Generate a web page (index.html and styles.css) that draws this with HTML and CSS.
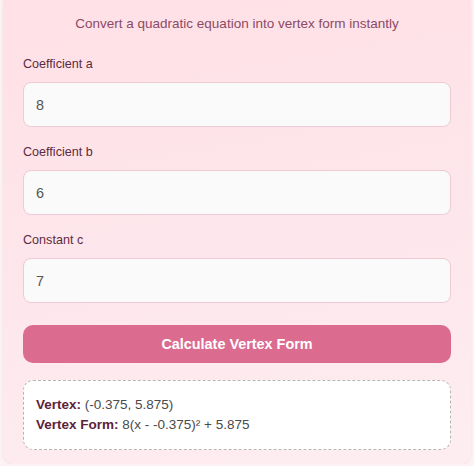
FILE: index.html
```html
<!DOCTYPE html>
<html>
<head>
<meta charset="utf-8">
<link rel="stylesheet" href="styles.css">
</head>
<body>
<div class="card">
  <p class="subtitle">Convert a quadratic equation into vertex form instantly</p>
  <div class="group">
    <label class="label">Coefficient a</label>
    <div class="input">8</div>
  </div>
  <div class="group">
    <label class="label">Coefficient b</label>
    <div class="input">6</div>
  </div>
  <div class="group">
    <label class="label">Constant c</label>
    <div class="input">7</div>
  </div>
  <button class="btn">Calculate Vertex Form</button>
  <div class="result">
    <div class="line"><b>Vertex:</b> (-0.375, 5.875)</div>
    <div class="line"><b>Vertex Form:</b> 8(x - -0.375)² + 5.875</div>
  </div>
</div>
</body>
</html>
```
FILE: styles.css
```css
html, body {
  margin: 0;
  padding: 0;
  background: #fdf3f5;
  font-family: "Liberation Sans", Arial, sans-serif;
}
.card {
  margin: 0 3px;
  height: 464px;
  box-sizing: border-box;
  padding: 15px 20px 0 20px;
  background: linear-gradient(170deg, #ffe0e6 0%, #fde7ec 55%, #fdedf1 100%);
  border-radius: 0 0 12px 12px;
  box-shadow: 0 1px 3px rgba(200, 150, 165, 0.25);
}
.subtitle {
  margin: 0 0 24px 0;
  text-align: center;
  font-size: 13.5px;
  line-height: 17px;
  color: #8c4a65;
}
.group {
  margin-bottom: 17px;
}
.label {
  display: block;
  font-size: 12.6px;
  line-height: 17px;
  margin-bottom: 9px;
  color: #5e2a3e;
}
.input {
  height: 45px;
  box-sizing: border-box;
  border: 1px solid #efc9d4;
  border-radius: 8px;
  background: #fafafa;
  padding: 0 12px;
  display: flex;
  align-items: center;
  font-size: 14.4px;
  color: #555;
}
.btn {
  display: block;
  width: 100%;
  height: 38px;
  margin-top: 22px;
  border: none;
  border-radius: 10px;
  background: #db6b8f;
  color: #fff;
  font-family: "Liberation Sans", Arial, sans-serif;
  font-weight: bold;
  font-size: 14.4px;
  padding: 0;
}
.result {
  margin-top: 17px;
  height: 70px;
  box-sizing: border-box;
  border: 1px dashed #b9b3b6;
  border-radius: 10px;
  background: #fff;
  padding: 14px 12px;
  font-size: 13.5px;
  line-height: 20px;
  color: #4a4a4a;
}
.result b {
  color: #5e2238;
}
```
